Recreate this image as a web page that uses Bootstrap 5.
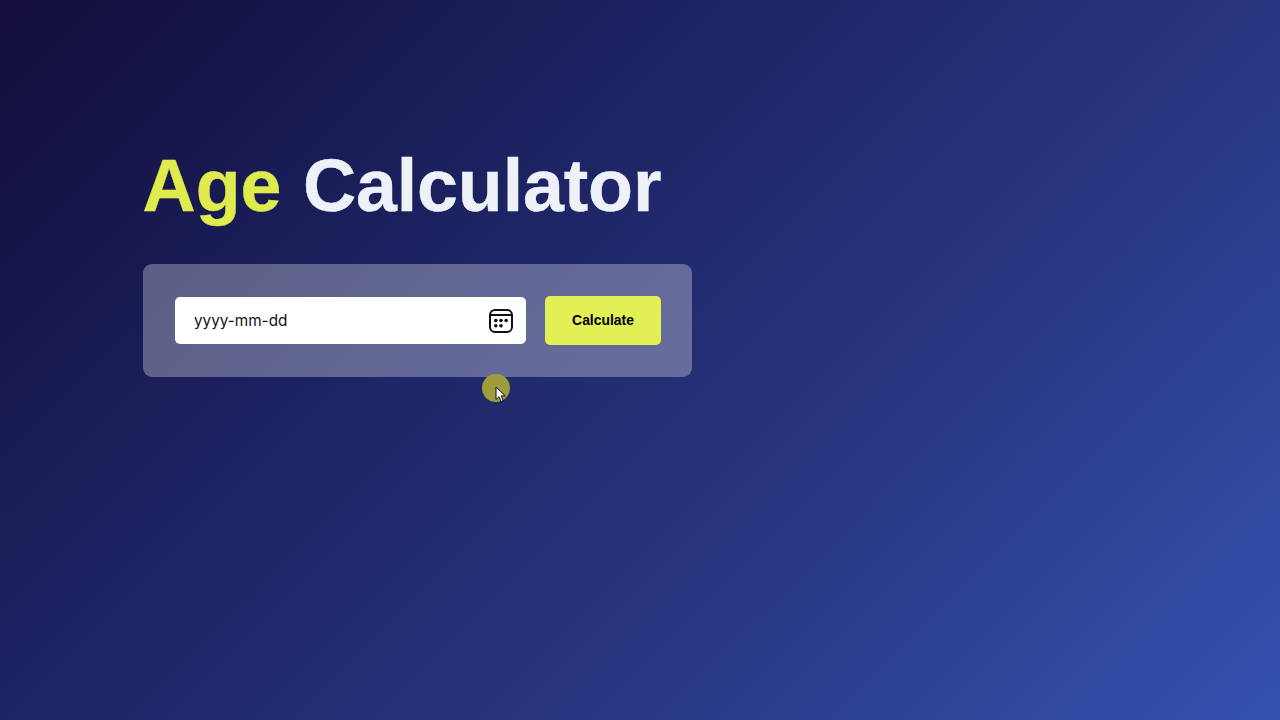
<!DOCTYPE html>
<html lang="en">
<head>
<meta charset="utf-8">
<title>Age Calculator</title>
<link rel="stylesheet" href="https://cdn.jsdelivr.net/npm/bootstrap@5.3.0/dist/css/bootstrap.min.css">
<style>
html,body{height:100%;}
body{background:linear-gradient(135deg,#120d3a 0%,#1c2260 33%,#283782 66%,#3552b0 100%);overflow:hidden;font-family:"Liberation Sans",Arial,sans-serif;}
.stage{padding:144px 0 0 142.5px;}
.headline{font-size:73.6px;font-weight:700;line-height:84px;color:#eff1f8;margin:0 0 36px;font-family:"Liberation Sans",Arial,sans-serif;word-spacing:1px;-webkit-text-stroke:.4px currentColor;}
.headline span{color:#e0ec4e;}
.headline b{font-weight:700;letter-spacing:-.15px;}
.panel{width:549.5px;height:113px;background:rgba(255,255,255,.3);border-radius:9px;padding:0 31px 0 32.5px;}
.datebox{width:351px;height:47px;padding:1px 12px 0 19px;border-radius:5px;border:0;font-family:Inter,"Liberation Sans",sans-serif;font-size:15.3px;color:#111;}
.calcbtn{width:116px;height:49px;margin-left:19px;background:#e2ef55;border:0;border-radius:5px;color:#000;font-weight:700;font-size:13.9px;padding:0;}
.calcbtn:hover{background:#e2ef55;color:#000;}
.clickdot{position:absolute;left:481.5px;top:374px;width:28px;height:28px;border-radius:50%;background:#9e9c3c;}
.pointer{position:absolute;left:495px;top:386px;}
</style>
</head>
<body>
<div class="stage">
  <h1 class="headline"><span>Age</span> <b>Calculator</b></h1>
  <div class="panel d-flex align-items-center">
    <div class="datebox bg-white d-flex align-items-center justify-content-between flex-shrink-0">
      <span>yyyy-mm-dd</span>
      <svg width="26" height="26" viewBox="0 0 26 26" fill="none" stroke="#111" stroke-width="2">
        <rect x="2" y="2" width="22" height="22" rx="5"/>
        <path d="M2 7h22"/>
        <g fill="#111" stroke="none"><circle cx="7.8" cy="12.5" r="1.8"/><circle cx="13" cy="12.5" r="1.8"/><circle cx="18.2" cy="12.5" r="1.8"/><circle cx="7.8" cy="17.8" r="1.8"/><circle cx="13" cy="17.8" r="1.8"/></g>
      </svg>
    </div>
    <button type="button" class="btn calcbtn flex-shrink-0">Calculate</button>
  </div>
</div>
<div class="clickdot"></div>
<svg class="pointer" width="12" height="17" viewBox="0 0 12 17"><path d="M1 1v12.5l3-2.8 2 4.8 2.2-1-2-4.6h4.1z" fill="#fff" stroke="#111" stroke-width="1"/></svg>
<script src="https://cdn.jsdelivr.net/npm/bootstrap@5.3.0/dist/js/bootstrap.bundle.min.js"></script>
</body>
</html>
